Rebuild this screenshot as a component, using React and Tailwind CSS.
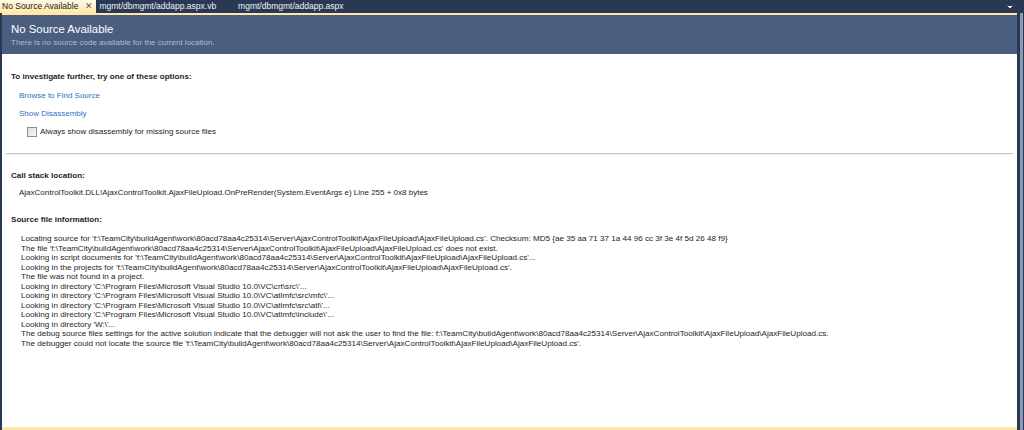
import { ChevronDown } from 'lucide-react';

const sourceLines = [
  "Locating source for 'f:\\TeamCity\\buildAgent\\work\\80acd78aa4c25314\\Server\\AjaxControlToolkit\\AjaxFileUpload\\AjaxFileUpload.cs'. Checksum: MD5 {ae 35 aa 71 37 1a 44 96 cc 3f 3e 4f 5d 26 48 f9}",
  "The file 'f:\\TeamCity\\buildAgent\\work\\80acd78aa4c25314\\Server\\AjaxControlToolkit\\AjaxFileUpload\\AjaxFileUpload.cs' does not exist.",
  "Looking in script documents for 'f:\\TeamCity\\buildAgent\\work\\80acd78aa4c25314\\Server\\AjaxControlToolkit\\AjaxFileUpload\\AjaxFileUpload.cs'...",
  "Looking in the projects for 'f:\\TeamCity\\buildAgent\\work\\80acd78aa4c25314\\Server\\AjaxControlToolkit\\AjaxFileUpload\\AjaxFileUpload.cs'.",
  'The file was not found in a project.',
  "Looking in directory 'C:\\Program Files\\Microsoft Visual Studio 10.0\\VC\\crt\\src\\'...",
  "Looking in directory 'C:\\Program Files\\Microsoft Visual Studio 10.0\\VC\\atlmfc\\src\\mfc\\'...",
  "Looking in directory 'C:\\Program Files\\Microsoft Visual Studio 10.0\\VC\\atlmfc\\src\\atl\\'...",
  "Looking in directory 'C:\\Program Files\\Microsoft Visual Studio 10.0\\VC\\atlmfc\\include\\'...",
  "Looking in directory 'W:\\'...",
  'The debug source files settings for the active solution indicate that the debugger will not ask the user to find the file: f:\\TeamCity\\buildAgent\\work\\80acd78aa4c25314\\Server\\AjaxControlToolkit\\AjaxFileUpload\\AjaxFileUpload.cs.',
  "The debugger could not locate the source file 'f:\\TeamCity\\buildAgent\\work\\80acd78aa4c25314\\Server\\AjaxControlToolkit\\AjaxFileUpload\\AjaxFileUpload.cs'.",
];

function Tab({ label, active }) {
  if (active) {
    return (
      <div className="flex h-[13px] items-center gap-[7px] bg-gradient-to-b from-[#fffbe6] to-[#ffe8a6] pl-[2px] pr-[3px] text-[#1b1b1b]">
        <span>{label}</span>
        <span className="text-[9px] leading-none text-[#5a5a5a]">✕</span>
      </div>
    );
  }
  return <div className="flex h-[13px] items-center px-[3px] text-[#f0f2f6]">{label}</div>;
}

export default function App() {
  return (
    <div className="flex h-[430px] w-[1024px] flex-col overflow-hidden bg-[#293955] font-['Liberation_Sans',Arial,sans-serif]">
      <div className="flex h-[13px] shrink-0 items-center text-[8.5px]">
        <Tab label="No Source Available" active />
        <Tab label="mgmt/dbmgmt/addapp.aspx.vb" />
        <div className="w-[16px]" />
        <Tab label="mgmt/dbmgmt/addapp.aspx" />
        <div className="flex-1" />
        <ChevronDown className="mr-[4px] h-[8px] w-[8px] fill-white text-white" strokeWidth={3} />
        <div className="w-[6px]" />
      </div>

      <div className="flex min-h-0 flex-1">
        <div className="flex min-w-0 flex-1 flex-col pl-[2px]">
          <div className="h-[2px] bg-[#ffe8a6]" />
          <div className="h-[39px] bg-[#4b5e80] px-[9px] pt-[7px]">
            <div className="text-[11.4px] leading-[15px] text-white">No Source Available</div>
            <div className="mt-[1px] text-[8px] leading-[10px] text-[#aebbd0]">There is no source code available for the current location.</div>
          </div>

          <div className="flex flex-1 flex-col bg-white pt-[17px] text-[8px] text-[#1e1e1e]">
            <div className="pl-[9px] text-[8.1px] font-bold leading-[12px]">To investigate further, try one of these options:</div>
            <div className="mt-[7px] pl-[17px] leading-[12px] text-[#2f6fc4]">Browse to Find Source</div>
            <div className="mt-[6px] pl-[17px] leading-[12px] text-[#2f6fc4]">Show Disassembly</div>
            <div className="mt-[6px] flex h-[12px] items-center gap-[3px] pl-[25px]">
              <div className="h-[10px] w-[10px] border border-[#8f8f8f] bg-gradient-to-br from-[#dcdcdc] to-[#fafafa]" />
              <span>Always show disassembly for missing source files</span>
            </div>

            <div className="mx-[4px] mt-[15px] h-[2px] border-t border-[#c3c7cf] bg-[#eef0f4]" />

            <div className="mt-[15px] pl-[9px] text-[8.1px] font-bold leading-[12px]">Call stack location:</div>
            <div className="mt-[5px] pl-[17px] leading-[12px]">AjaxControlToolkit.DLL!AjaxControlToolkit.AjaxFileUpload.OnPreRender(System.EventArgs e) Line 255 + 0x8 bytes</div>

            <div className="mt-[15px] pl-[9px] text-[8.1px] font-bold leading-[12px]">Source file information:</div>
            <div className="mt-[8px] pl-[19px]">
              {sourceLines.map((line, i) => (
                <div key={i} className="whitespace-nowrap text-[8.1px] leading-[9.5px]">{line}</div>
              ))}
            </div>
            <div className="flex-1" />
            <div className="h-[3px] bg-[#ffe8a6]" />
          </div>
        </div>
        <div className="flex w-[7px] shrink-0">
          <div className="w-[3px] bg-[#293955]" />
          <div className="w-[3px] bg-[#8d9ab0]" />
          <div className="w-[1px] bg-[#293955]" />
        </div>
      </div>
    </div>
  );
}
